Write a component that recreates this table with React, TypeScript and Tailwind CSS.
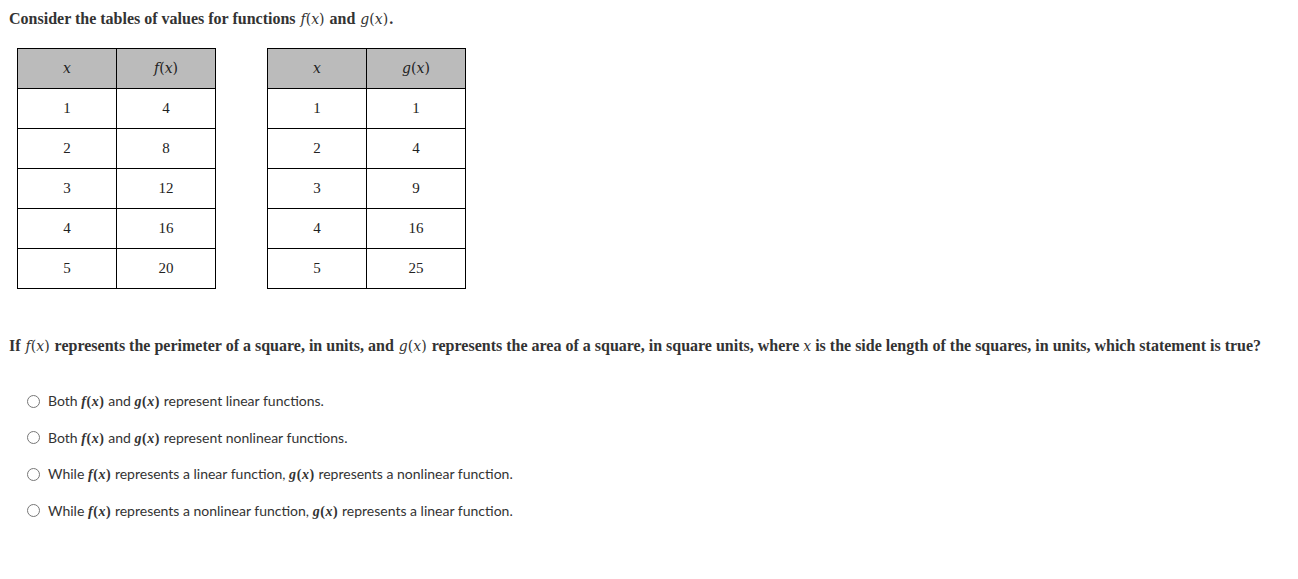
import React from "react";

const M: React.FC<{ children: React.ReactNode }> = ({ children }) => (
  <span className="font-['DejaVu_Serif',serif] italic font-normal text-[14px]">{children}</span>
);

const Fx = ({ name }: { name: string }) => (
  <span className="font-['DejaVu_Serif',serif] font-normal text-[14px] mx-[1px]">
    <span className="italic">{name}</span>(<span className="italic">x</span>)
  </span>
);

const Fb = ({ name }: { name: string }) => (
  <span className="font-['Liberation_Serif',serif] font-bold text-[14px] tracking-[0.6px]">
    <span className="italic">{name}</span>(<span className="italic">x</span>)
  </span>
);

const ValueTable = ({ name, values }: { name: string; values: number[] }) => (
  <table className="border-collapse font-['Liberation_Serif',serif] text-[15px] text-[#222]">
    <thead>
      <tr className="bg-[#bbbbbb]">
        <th className="w-[99px] h-[40px] border border-black font-normal">
          <M>x</M>
        </th>
        <th className="w-[99px] h-[40px] border border-black font-normal">
          <Fx name={name} />
        </th>
      </tr>
    </thead>
    <tbody>
      {values.map((v, i) => (
        <tr key={i}>
          <td className="h-[40px] border border-black text-center">{i + 1}</td>
          <td className="h-[40px] border border-black text-center">{v}</td>
        </tr>
      ))}
    </tbody>
  </table>
);

const options = [
  <>Both <Fb name="f" /> and <Fb name="g" /> represent linear functions.</>,
  <>Both <Fb name="f" /> and <Fb name="g" /> represent nonlinear functions.</>,
  <>While <Fb name="f" /> represents a linear function, <Fb name="g" /> represents a nonlinear function.</>,
  <>While <Fb name="f" /> represents a nonlinear function, <Fb name="g" /> represents a linear function.</>,
];

export default function App() {
  return (
    <div className="w-[1298px] h-[579px] bg-white text-[#333] pl-[9px] pt-[9px]">
      <p className="font-['Liberation_Serif',serif] font-bold text-[16px] text-[#333] leading-[20px]">
        Consider the tables of values for functions <Fx name="f" /> and <Fx name="g" />.
      </p>

      <div className="flex gap-[51px] ml-[8px] mt-[19px]">
        <ValueTable name="f" values={[4, 8, 12, 16, 20]} />
        <ValueTable name="g" values={[1, 4, 9, 16, 25]} />
      </div>

      <p className="mt-[47px] font-['Liberation_Serif',serif] font-bold text-[16px] text-[#333] leading-[20px]">
        If <Fx name="f" /> represents the perimeter of a square, in units, and <Fx name="g" /> represents the area of a
        square, in square units, where <M>x</M> is the side length of the squares, in units, which statement is true?
      </p>

      <div className="mt-[36px] ml-[18px] flex flex-col gap-[18.6px] font-['Lato',sans-serif] text-[14px] text-[#333]">
        {options.map((o, i) => (
          <label key={i} className="flex items-center gap-[8px] h-[18px]">
            <span className="w-[13px] h-[13px] rounded-full border border-[#777] bg-white" />
            <span>{o}</span>
          </label>
        ))}
      </div>
    </div>
  );
}
